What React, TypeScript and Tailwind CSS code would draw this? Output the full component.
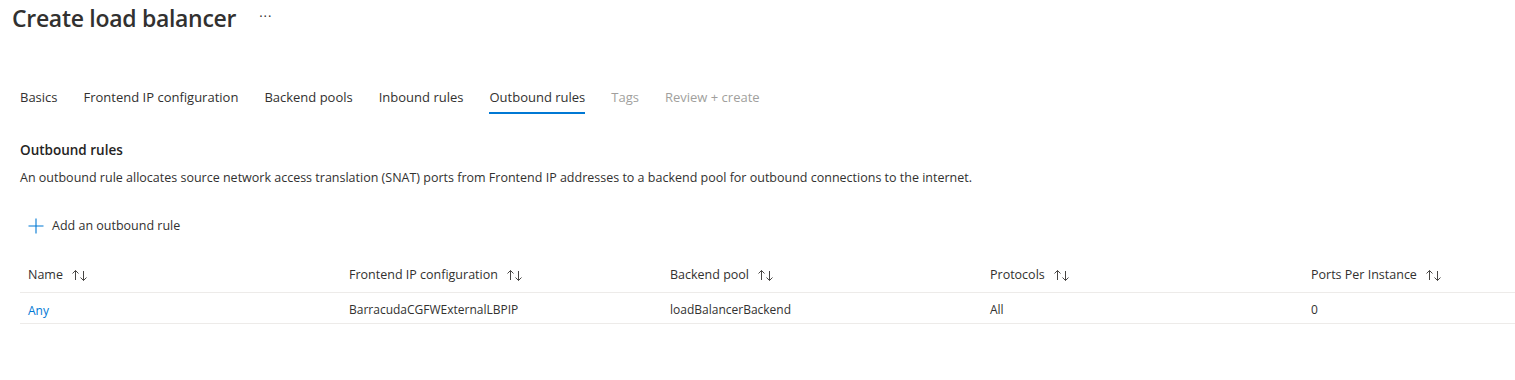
import React from 'react';

const font = { fontFamily: '"Open Sans", "Noto Sans", sans-serif' };

const tabs = [
  { label: 'Basics', state: 'normal' },
  { label: 'Frontend IP configuration', state: 'normal' },
  { label: 'Backend pools', state: 'normal' },
  { label: 'Inbound rules', state: 'normal' },
  { label: 'Outbound rules', state: 'active' },
  { label: 'Tags', state: 'disabled' },
  { label: 'Review + create', state: 'disabled' },
];

const columns = ['Name', 'Frontend IP configuration', 'Backend pool', 'Protocols', 'Ports Per Instance'];

const rows = [
  ['Any', 'BarracudaCGFWExternalLBPIP', 'loadBalancerBackend', 'All', '0'],
];

/* ─────────────── sort glyph ─────────────── */
const SortIcon = () => (
  <svg width="18" height="13" viewBox="0 0 18 13" fill="none" stroke="#484644" strokeWidth="1" className="ml-[8px]">
    <path d="M4.5 11V1.5M1.5 4.5L4.5 1.5L7.5 4.5" />
    <path d="M12.5 2v9.5M9.5 8.5L12.5 11.5L15.5 8.5" />
  </svg>
);

export default function App() {
  return (
    <div className="w-[1515px] h-[380px] bg-white text-[#323130] overflow-hidden" style={font}>
      {/* Title */}
      <div className="flex items-center pl-3 pt-[3px] h-[34px]">
        <h1 className="text-[23px] font-semibold leading-none tracking-[-0.3px]">Create load balancer</h1>
        <span className="ml-[23px] text-[13px] text-[#323130] leading-none tracking-[1px] -mt-1">···</span>
      </div>

      {/* Tabs */}
      <div className="flex gap-[26px] pl-5 mt-[48px]">
        {tabs.map((t) => (
          <div key={t.label} className="flex flex-col">
            <span
              className={[
                'text-[13px] leading-[30px] whitespace-nowrap',
                t.state === 'disabled' ? 'text-[#a19f9d]' : 'text-[#323130]',
              ].join(' ')}
            >
              {t.label}
            </span>
            <div className={t.state === 'active' ? 'h-[2px] bg-[#0078d4]' : 'h-[2px]'} />
          </div>
        ))}
      </div>

      {/* Section */}
      <div className="pl-5 pt-[26px]">
        <h2 className="text-[13.5px] font-semibold leading-[20px] text-[#252423]">Outbound rules</h2>
        <p className="text-[12.5px] leading-[20px] mt-[8px]">
          An outbound rule allocates source network access translation (SNAT) ports from Frontend IP addresses to a backend pool for outbound connections to the internet.
        </p>
      </div>

      {/* Command */}
      <div className="flex items-center pl-[28px] mt-[28px] h-[20px]">
        <svg width="16" height="16" viewBox="0 0 16 16" stroke="#0078d4" strokeWidth="1.1" fill="none">
          <path d="M8 0.5v15M0.5 8h15" />
        </svg>
        <span className="ml-[8px] text-[12.5px]">Add an outbound rule</span>
      </div>

      {/* Table */}
      <div className="ml-5 mt-[19px] w-[1495px]">
        <div className="grid grid-cols-[321px_321px_320px_321px_1fr] h-[38px] pt-[4px] border-b border-[#edebe9] items-center">
          {columns.map((c) => (
            <div key={c} className="flex items-center pl-2 text-[12.5px]">
              {c}
              <SortIcon />
            </div>
          ))}
        </div>
        {rows.map((r) => (
          <div key={r[0]} className="grid grid-cols-[321px_321px_320px_321px_1fr] h-[31px] pt-[4px] border-b border-[#edebe9] items-center">
            {r.map((v, i) => (
              <div
                key={i}
                className={['pl-2 text-[12px]', i === 0 ? 'text-[#0078d4] pt-[2px]' : ''].join(' ')}
              >
                {v}
              </div>
            ))}
          </div>
        ))}
      </div>
    </div>
  );
}
